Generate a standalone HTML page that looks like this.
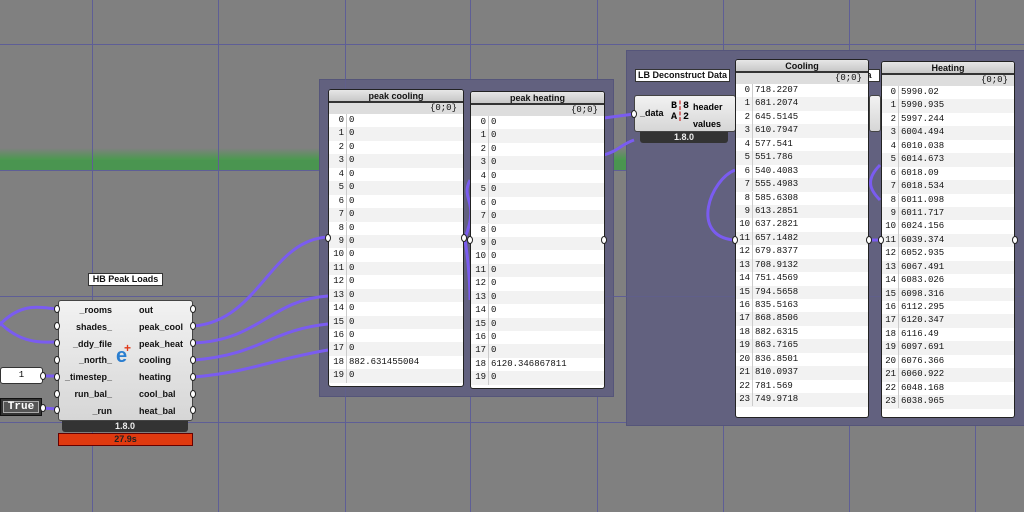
<!DOCTYPE html>
<html><head><meta charset="utf-8"><style>
*{margin:0;padding:0;box-sizing:border-box}
body{width:1024px;height:512px;overflow:hidden;position:relative;background:#808080;font-family:"Liberation Sans",sans-serif}
.a{position:absolute}
.vl{position:absolute;top:0;width:1px;height:512px;background:#5e5e96}
.hl{position:absolute;left:0;height:1px;width:1024px;background:#5e5e96}
.grp{position:absolute;background:#62617f;border:1px solid #55557a}
.panel{position:absolute;background:#fff;border:1px solid #222;border-radius:3px;overflow:hidden}
.ph{height:13px;background:linear-gradient(#e6e6e6,#c8c8c8);border-bottom:2px solid #333;font:bold 9px "Liberation Sans",sans-serif;text-align:center;line-height:12px;color:#111}
.pp{height:11px;background:#ddd;font:9px "Liberation Mono",monospace;text-align:right;padding-right:6px;line-height:11px;color:#111}
.row{height:13.45px;font:9px "Liberation Mono",monospace;line-height:13.4px;color:#111;white-space:nowrap;position:relative}
.row:nth-child(even){background:#f2f2f2}
.row .i{display:inline-block;text-align:right;padding-right:2px;border-right:1px solid #ccc}
.row .v{padding-left:2px}
.comp{position:absolute;background:linear-gradient(#f2f2f2,#d6d6d6);border:1px solid #444;border-radius:3px;font:bold 9px "Liberation Sans",sans-serif;color:#111}
.lbl{position:absolute;background:#fff;border:1px solid #333;font:bold 9px "Liberation Sans",sans-serif;text-align:center;line-height:11px;color:#111}
.ver{position:absolute;background:#333;color:#eee;font:bold 9px "Liberation Sans",sans-serif;text-align:center;line-height:11px;border-radius:0 0 3px 3px}
.dot{position:absolute;width:6px;height:8px;background:#fff;border:1px solid #222;border-radius:50%}
</style></head><body>
<div class="a" style="left:0;top:148px;width:1024px;height:12px;background:linear-gradient(#808080,#4a9a4e)"></div>
<div class="a" style="left:0;top:160px;width:1024px;height:10px;background:#4a9550"></div>
<div class="vl" style="left:92px"></div><div class="vl" style="left:218px"></div><div class="vl" style="left:345px"></div><div class="vl" style="left:470px"></div><div class="vl" style="left:597px"></div><div class="vl" style="left:723px"></div><div class="vl" style="left:849px"></div><div class="vl" style="left:975px"></div>
<div class="hl" style="top:44px"></div><div class="hl" style="top:170px"></div><div class="hl" style="top:296px"></div><div class="hl" style="top:422px"></div>

<div class="grp" style="left:319px;top:79px;width:295px;height:318px"></div>
<div class="grp" style="left:626px;top:50px;width:400px;height:376px"></div>
<div class="vl" style="left:345px;top:79px;height:318px;opacity:.5"></div>
<div class="hl" style="top:296px;left:319px;width:707px;opacity:.5"></div>

<svg class="a" style="left:0;top:0" width="1024" height="512">
<g fill="none" stroke="#7a5cf0" stroke-width="3">
<path d="M-5 330 C20 300 40 308 58 309"/>
<path d="M-5 318 C20 345 40 342 58 342"/>
<path d="M43 376 L58 376"/><path d="M42 408 L58 409"/>
<path d="M194 326 C260 320 270 240 328 237"/>
<path d="M194 343 C260 340 270 300 328 296"/>
<path d="M194 360 C260 355 270 330 328 324"/>
<path d="M194 377 C250 372 270 360 328 350"/>
<path d="M465 238 C480 200 460 200 470 180"/>
<path d="M465 240 C470 270 470 300 470 300"/>
<path d="M604 155 C620 150 620 145 634 140"/>
<path d="M604 118 L634 114"/>
<path d="M733 240 C690 235 710 180 735 170"/>
<path d="M869 240 L880 240"/>
<path d="M880 165 C865 180 870 190 880 200"/>
</g></svg>

<div class="lbl" style="left:88px;top:273px;width:75px;height:13px">HB Peak Loads</div>
<div class="comp" style="left:58px;top:300px;width:135px;height:121px"></div>
<div class="a" style="left:58px;top:302px;width:54px;text-align:right;font:bold 9px 'Liberation Sans',sans-serif;line-height:16.8px;color:#111">_rooms<br>shades_<br>_ddy_file<br>_north_<br>_timestep_<br>run_bal_<br>_run</div>
<div class="a" style="left:139px;top:302px;font:bold 9px 'Liberation Sans',sans-serif;line-height:16.8px;color:#111">out<br>peak_cool<br>peak_heat<br>cooling<br>heating<br>cool_bal<br>heat_bal</div>
<div class="a" style="left:116px;top:345px;font:bold 20px 'Liberation Sans',sans-serif;color:#2a7ed0">e</div><div class="a" style="left:124px;top:341px;font:bold 12px 'Liberation Sans',sans-serif;color:#e03a1a">+</div>
<div class="ver" style="left:62px;top:421px;width:126px;height:11px">1.8.0</div>
<div class="a" style="left:58px;top:433px;width:135px;height:13px;background:#e03a10;border:1px solid #600;font:bold 9px 'Liberation Sans',sans-serif;text-align:center;line-height:11px;color:#222">27.9s</div>
<div class="a" style="left:0;top:367px;width:43px;height:17px;background:#fff;border:1px solid #333;border-radius:3px;font:9px 'Liberation Mono',monospace;text-align:center;line-height:15px">1</div>
<div class="a" style="left:0;top:398px;width:42px;height:18px;background:#333;border:1px solid #111;padding:2px"><div style="background:#555;border:1px solid #aaa;height:12px;color:#fff;font:bold 11px 'Liberation Mono',monospace;text-align:center;line-height:11px">True</div></div>

<div class="lbl" style="left:635px;top:69px;width:95px;height:13px">LB Deconstruct Data</div>
<div class="lbl" style="left:858px;top:69px;width:22px;height:13px">a</div>
<div class="comp" style="left:634px;top:95px;width:102px;height:37px"></div>
<div class="a" style="left:640px;top:108px;font:bold 9px 'Liberation Sans',sans-serif">_data</div>
<div class="a" style="left:671px;top:101px;font:bold 10px 'Liberation Mono',monospace;line-height:11px">B<span style="color:#c33">¦</span>8<br>A<span style="color:#c33">¦</span>2</div>
<div class="a" style="left:693px;top:99px;font:bold 9px 'Liberation Sans',sans-serif;line-height:17px">header<br>values</div>
<div class="ver" style="left:640px;top:132px;width:88px;height:11px">1.8.0</div>
<div class="comp" style="left:869px;top:95px;width:12px;height:37px"></div>

<div id="p1" class="panel" style="left:328px;top:89px;width:136px;height:298px"><div class="ph">peak cooling</div><div class="pp">{0;0}</div></div>
<div id="p2" class="panel" style="left:470px;top:91px;width:135px;height:298px"><div class="ph">peak heating</div><div class="pp">{0;0}</div></div>
<div id="p3" class="panel" style="left:735px;top:59px;width:134px;height:359px"><div class="ph">Cooling</div><div class="pp">{0;0}</div></div>
<div id="p4" class="panel" style="left:881px;top:61px;width:134px;height:357px"><div class="ph">Heating</div><div class="pp">{0;0}</div></div>

<div class="dot" style="left:54px;top:305px"></div><div class="dot" style="left:54px;top:322px"></div><div class="dot" style="left:54px;top:339px"></div><div class="dot" style="left:54px;top:356px"></div><div class="dot" style="left:54px;top:373px"></div><div class="dot" style="left:54px;top:390px"></div><div class="dot" style="left:54px;top:406px"></div>
<div class="dot" style="left:190px;top:305px"></div><div class="dot" style="left:190px;top:322px"></div><div class="dot" style="left:190px;top:339px"></div><div class="dot" style="left:190px;top:356px"></div><div class="dot" style="left:190px;top:373px"></div><div class="dot" style="left:190px;top:390px"></div><div class="dot" style="left:190px;top:406px"></div>
<div class="dot" style="left:40px;top:372px"></div><div class="dot" style="left:40px;top:404px"></div>
<div class="dot" style="left:325px;top:234px"></div><div class="dot" style="left:461px;top:234px"></div><div class="dot" style="left:467px;top:236px"></div><div class="dot" style="left:601px;top:236px"></div>
<div class="dot" style="left:631px;top:110px"></div><div class="dot" style="left:732px;top:236px"></div><div class="dot" style="left:866px;top:236px"></div><div class="dot" style="left:878px;top:236px"></div><div class="dot" style="left:1012px;top:236px"></div>

<script>
function fill(id,vals,w){var p=document.getElementById(id);var h='';for(var i=0;i<vals.length;i++){h+='<div class="row"><span class="i" style="width:'+w+'px">'+i+'</span><span class="v">'+vals[i]+'</span></div>';}p.insertAdjacentHTML('beforeend',h);}
var z=[];for(var i=0;i<20;i++)z.push('0');
var a=z.slice();a[18]='882.631455004';var b=z.slice();b[18]='6120.346867811';
fill('p1',a,18);fill('p2',b,18);
fill('p3',['718.2207','681.2074','645.5145','610.7947','577.541','551.786','540.4083','555.4983','585.6308','613.2851','637.2821','657.1482','679.8377','708.9132','751.4569','794.5658','835.5163','868.8506','882.6315','863.7165','836.8501','810.0937','781.569','749.9718'],17);
fill('p4',['5990.02','5990.935','5997.244','6004.494','6010.038','6014.673','6018.09','6018.534','6011.098','6011.717','6024.156','6039.374','6052.935','6067.491','6083.026','6098.316','6112.295','6120.347','6116.49','6097.691','6076.366','6060.922','6048.168','6038.965'],17);
</script>
</body></html>
